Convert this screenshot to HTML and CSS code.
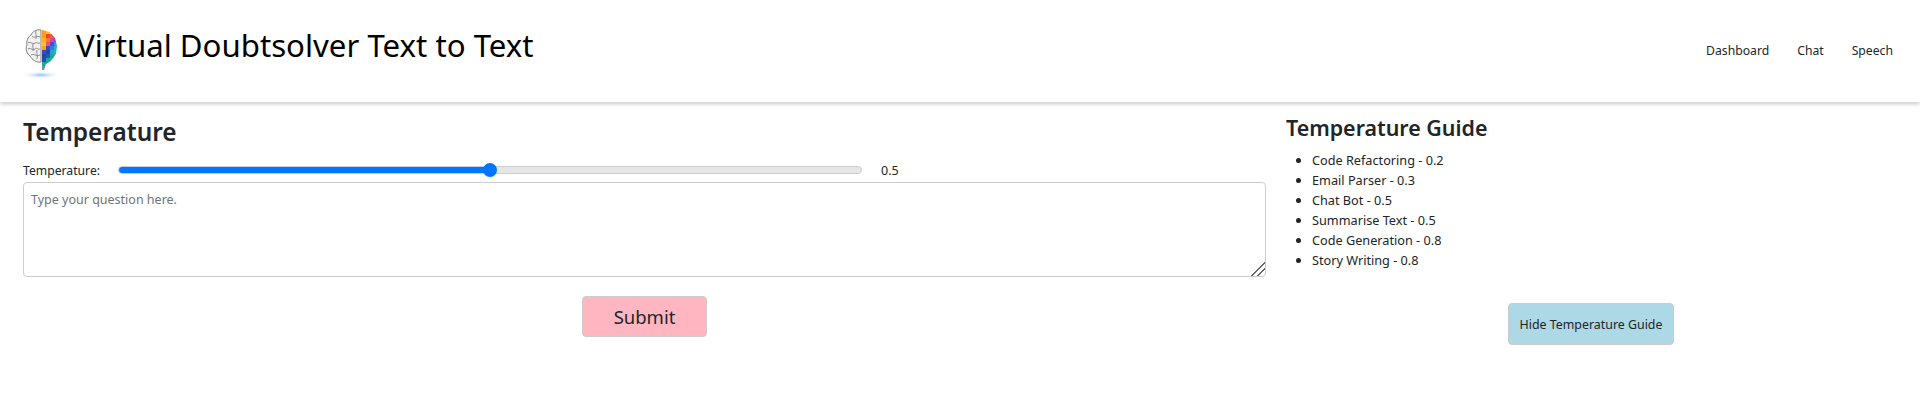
FILE: index.html
```html
<!DOCTYPE html>
<html lang="en">
<head>
    <meta charset="UTF-8">
    <meta name="viewport" content="width=device-width, initial-scale=1.0">
    <title>Virtual Doubtsolver Text to Text</title>
    <link rel="stylesheet" href="styles.css">
</head>
<body>

    <header class="navbar">
        <div class="brand">
            <svg class="brand-logo" viewBox="0 0 40 56" width="40" height="56" aria-hidden="true">
                <defs>
                    <radialGradient id="glow">
                        <stop offset="0" stop-color="#8fc1f5"/>
                        <stop offset="1" stop-color="#ffffff" stop-opacity="0"/>
                    </radialGradient>
                    <clipPath id="rightHalf">
                        <path d="M20 4 L28 6 L33 12 L35 20 L34 28 L29 35 L24 38 L22 44 L20 44 Z"/>
                    </clipPath>
                </defs>
                <ellipse cx="19" cy="49" rx="20" ry="4" fill="url(#glow)"/>
                <!-- left half of the brain -->
                <path d="M19 4 C14 3 10 6 9 9 C6 11 4 15 5 19 C3 23 5 28 8 30 C10 34 15 37 19 36 Z" fill="#f1f1f1" stroke="#808080" stroke-width="1"/>
                <path d="M10 10 C12 13 15 9 18 11 M6 17 C9 15 10 19 13 17 C15 16 16 18 18 17 M6 23 C9 21 10 25 13 23 C15 21 16 24 18 23 M9 29 C12 27 14 31 18 29 M14 5 C13 8 15 9 14 13 M11 18 C10 21 12 22 11 25 M15 24 C14 27 16 28 15 33"
                      fill="none" stroke="#808080" stroke-width="0.9"/>
                <!-- right half, mosaic of colours -->
                <g clip-path="url(#rightHalf)">
                    <rect x="20" y="4" width="4" height="4" fill="#f9a11b"/>
                    <rect x="24" y="4" width="4" height="4" fill="#ffc02b"/>
                    <rect x="28" y="4" width="4" height="4" fill="#ffe27a"/>
                    <rect x="20" y="8" width="4" height="4" fill="#f9a11b"/>
                    <rect x="24" y="8" width="4" height="4" fill="#f0433a"/>
                    <rect x="28" y="8" width="4" height="4" fill="#ff5a36"/>
                    <rect x="32" y="8" width="4" height="4" fill="#c23fc4"/>
                    <rect x="20" y="12" width="4" height="4" fill="#ffb01f"/>
                    <rect x="24" y="12" width="4" height="4" fill="#ff7a1a"/>
                    <rect x="28" y="12" width="4" height="4" fill="#e23fa0"/>
                    <rect x="32" y="12" width="4" height="4" fill="#8a3fd0"/>
                    <rect x="20" y="16" width="4" height="4" fill="#ffc02b"/>
                    <rect x="24" y="16" width="4" height="4" fill="#e2557a"/>
                    <rect x="28" y="16" width="4" height="4" fill="#6a3fd8"/>
                    <rect x="32" y="16" width="4" height="4" fill="#2a9fe0"/>
                    <rect x="20" y="20" width="4" height="4" fill="#f9a11b"/>
                    <rect x="24" y="20" width="4" height="4" fill="#3a4bc0"/>
                    <rect x="28" y="20" width="4" height="4" fill="#2a7fe0"/>
                    <rect x="32" y="20" width="4" height="4" fill="#1fb5d8"/>
                    <rect x="20" y="24" width="4" height="4" fill="#3a4bc0"/>
                    <rect x="24" y="24" width="4" height="4" fill="#2a3fb0"/>
                    <rect x="28" y="24" width="4" height="4" fill="#2a9fe0"/>
                    <rect x="32" y="24" width="4" height="4" fill="#18c0b0"/>
                    <rect x="20" y="28" width="4" height="4" fill="#2a3fb0"/>
                    <rect x="24" y="28" width="4" height="4" fill="#1a5ab8"/>
                    <rect x="28" y="28" width="4" height="4" fill="#18a8a0"/>
                    <rect x="32" y="28" width="4" height="4" fill="#30c8a0"/>
                    <rect x="20" y="32" width="4" height="4" fill="#1f4fa8"/>
                    <rect x="24" y="32" width="4" height="4" fill="#18a8a0"/>
                    <rect x="28" y="32" width="4" height="4" fill="#20b898"/>
                    <rect x="20" y="36" width="4" height="4" fill="#18a8a0"/>
                    <rect x="24" y="36" width="4" height="4" fill="#16958f"/>
                    <rect x="20" y="40" width="4" height="4" fill="#6f8fa8"/>
                </g>
            </svg>
            <h1 class="brand-title">Virtual Doubtsolver Text to Text</h1>
        </div>
        <nav class="nav-links">
            <a href="#">Dashboard</a>
            <a href="#">Chat</a>
            <a href="#">Speech</a>
        </nav>
    </header>

    <main class="content">
        <section class="left-col">
            <h2 class="section-title">Temperature</h2>
            <div class="slider-row">
                <label class="slider-label" for="temperature">Temperature:</label>
                <input class="slider" id="temperature" type="range" min="0" max="1" step="0.1" value="0.5">
                <span class="slider-value">0.5</span>
            </div>
            <textarea class="question" placeholder="Type your question here."></textarea>
            <div class="submit-row">
                <button class="submit-button">Submit</button>
            </div>
        </section>

        <aside class="right-col">
            <h3 class="guide-title">Temperature Guide</h3>
            <ul class="guide-list">
                <li>Code Refactoring - 0.2</li>
                <li>Email Parser - 0.3</li>
                <li>Chat Bot - 0.5</li>
                <li>Summarise Text - 0.5</li>
                <li>Code Generation - 0.8</li>
                <li>Story Writing - 0.8</li>
            </ul>
            <div class="guide-button-row">
                <button class="guide-button">Hide Temperature Guide</button>
            </div>
        </aside>
    </main>

</body>
</html>
```

FILE: styles.css
```css
* {
    box-sizing: border-box;
}

body {
    font-family: "Noto Sans", "Open Sans", sans-serif;
    margin: 0;
    padding: 0;
    background-color: #fff;
    color: #212529;
    font-size: 12.5px;
}

.navbar {
    height: 102px;
    display: flex;
    justify-content: space-between;
    align-items: center;
    padding: 0 27px 0 22px;
    box-shadow: 0 2px 4px rgba(0, 0, 0, 0.2);
}

.brand {
    display: flex;
    align-items: flex-start;
    gap: 14px;
    height: 56px;
}

.brand-logo {
    margin-top: 3px;
}

.brand-title {
    margin: 0;
    font-size: 31.2px;
    font-weight: 400;
    line-height: 44px;
    color: #000;
}

.nav-links {
    display: flex;
    gap: 28px;
    margin-top: -2px;
}

.nav-links a {
    color: #212529;
    text-decoration: none;
    font-size: 12.2px;
}

.content {
    display: flex;
    padding: 14px 23px 0;
    gap: 20px;
}

.left-col {
    width: 1243px;
}

.right-col {
    flex: 1;
}

.section-title {
    margin: 0 0 12px;
    font-size: 24.4px;
    font-weight: 600;
    line-height: 32px;
}

.slider-row {
    display: flex;
    align-items: flex-start;
    height: 22px;
}

.slider-label {
    width: 95px;
    font-size: 12.2px;
    line-height: 20px;
    margin-top: 1px;
}

.slider {
    -webkit-appearance: none;
    appearance: none;
    width: 744px;
    height: 8px;
    margin: 6px 18px 0 0;
    border-radius: 4px;
    border: 1px solid #ccc;
    background: linear-gradient(to right, #0075ff 50%, #e6e6e6 50%);
}

.slider::-webkit-slider-thumb {
    -webkit-appearance: none;
    width: 14px;
    height: 14px;
    border-radius: 50%;
    background-color: #0075ff;
}

.slider-value {
    line-height: 20px;
    margin-top: 1px;
    margin-left: 1px;
}

.question {
    display: block;
    width: 100%;
    height: 95px;
    padding: 8px 7px;
    border: 1px solid #ccc;
    border-radius: 4px;
    font-family: inherit;
    font-size: 12.5px;
}

.question::placeholder {
    color: #6c757d;
}

.question::-webkit-resizer {
    background: linear-gradient(135deg, transparent 52%, #666 52%, #666 58%, transparent 58%, transparent 72%, #666 72%, #666 78%, transparent 78%);
}

.submit-row {
    text-align: center;
    margin-top: 19px;
}

.submit-button {
    width: 125px;
    height: 41px;
    font-family: inherit;
    font-size: 18.5px;
    color: #212529;
    background-color: #ffb6c1;
    border: 1px solid #ccc;
    border-radius: 4px;
}

.guide-title {
    margin: -1px 0 9px;
    font-size: 21.4px;
    font-weight: 600;
    line-height: 26px;
}

.guide-list {
    margin: 0;
    padding-left: 26px;
}

.guide-list li {
    font-size: 12.7px;
    line-height: 20px;
}

.guide-button-row {
    padding-left: 222px;
    margin-top: 33px;
}

.guide-button {
    width: 166px;
    height: 42px;
    font-family: inherit;
    font-size: 12.4px;
    color: #212529;
    background-color: #add8e6;
    border: 1px solid #ccc;
    border-radius: 4px;
}
```
